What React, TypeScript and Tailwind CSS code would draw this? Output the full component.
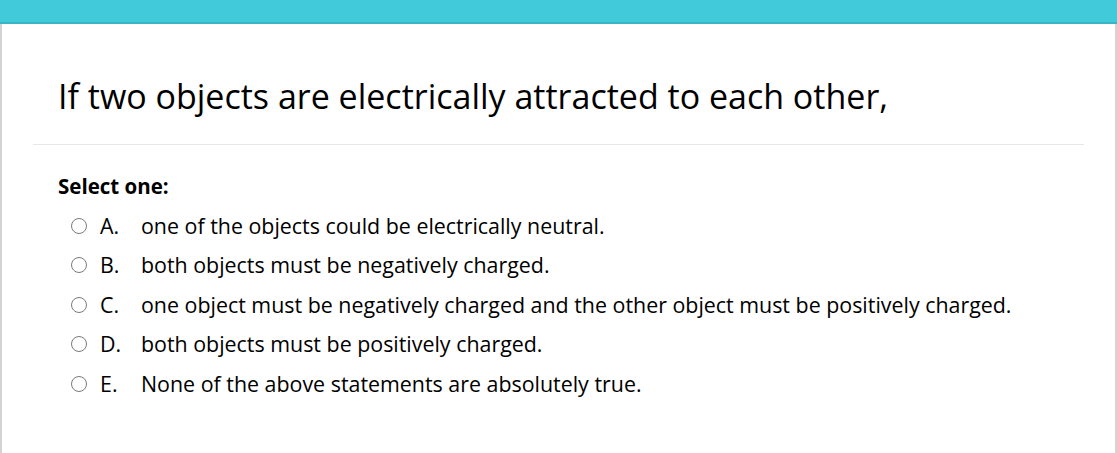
const options = [
  { letter: "A.", text: "one of the objects could be electrically neutral." },
  { letter: "B.", text: "both objects must be negatively charged." },
  {
    letter: "C.",
    text: "one object must be negatively charged and the other object must be positively charged.",
  },
  { letter: "D.", text: "both objects must be positively charged." },
  { letter: "E.", text: "None of the above statements are absolutely true." },
];

export default function App() {
  return (
    <div className="flex h-[453px] w-[1117px] flex-col bg-white font-['Open_Sans',sans-serif] text-black">
      <div className="h-6 shrink-0 bg-[#41cad9] shadow-[inset_0_-2px_0_#3bb5c3]" />
      <div className="flex-1 border-x-2 border-[#d4d4d4] pt-[50px]">
        <h1 className="pl-[56px] text-[34px] leading-[44px]">
          If two objects are electrically attracted to each other,
        </h1>
        <div className="mx-[31px] mt-[26px] h-px bg-[#e5e7eb]" />
        <div className="pl-[56px] pt-[29px]">
          <p className="text-[20.5px] font-bold leading-6">Select one:</p>
          <ul className="mt-[8px] flex flex-col">
            {options.map((o) => (
              <li key={o.letter} className="flex h-[39.5px] items-center text-[21.4px]">
                <span className="ml-[13px] h-[16px] w-[16px] shrink-0 rounded-full border-[1.5px] border-[#7a7a7a]" />
                <span className="ml-[13px] w-[41px]">{o.letter}</span>
                <span>{o.text}</span>
              </li>
            ))}
          </ul>
        </div>
      </div>
    </div>
  );
}
